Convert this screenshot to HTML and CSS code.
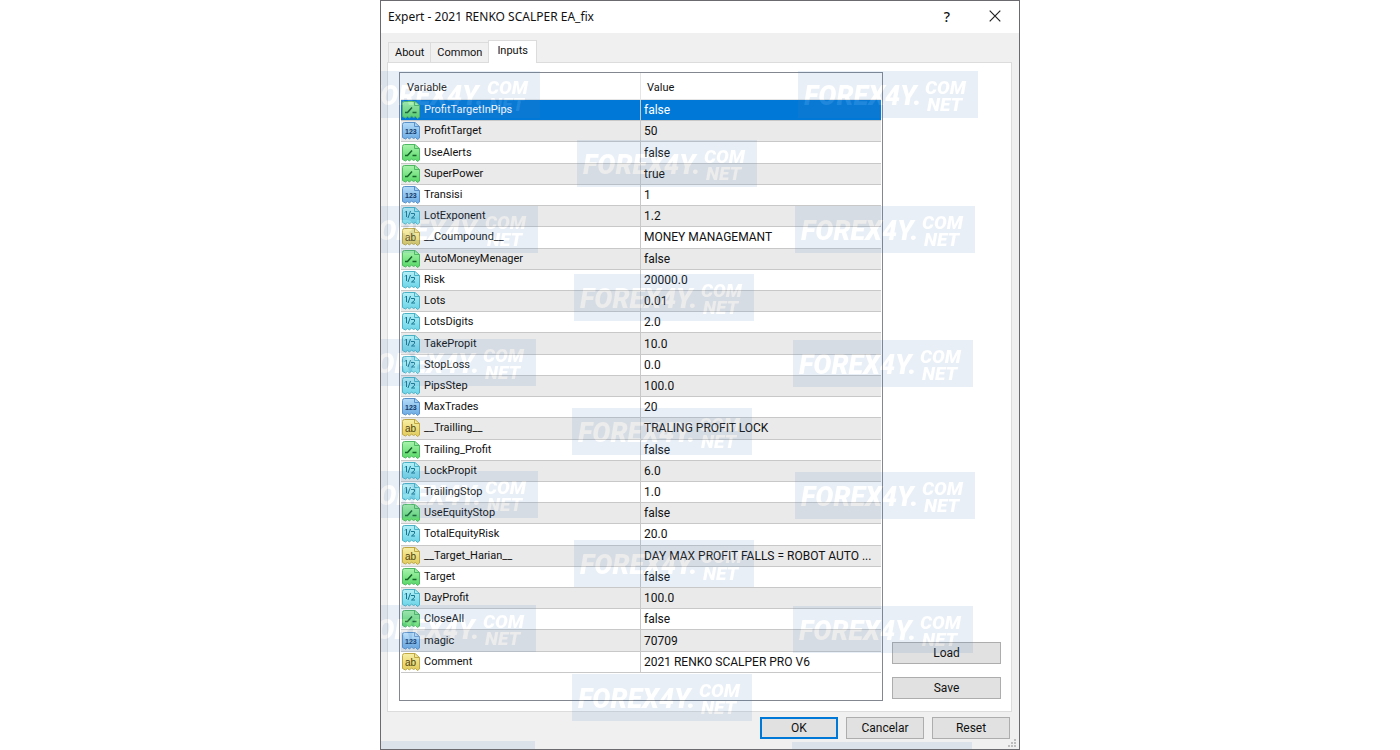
FILE: index.html
```html
<!DOCTYPE html>
<html lang="en">
<head>
  <meta charset="UTF-8" />
  <meta name="viewport" content="width=device-width, initial-scale=1.0" />
  <title>Expert - 2021 RENKO SCALPER EA_fix</title>
  <link rel="stylesheet" href="styles.css">
</head>
<body>

  <!-- shared icon shapes -->
  <svg class="defs" width="0" height="0" aria-hidden="true">
    <defs>
      <path id="note" d="M2.5 .5H13L17.5 4.5V16L15.5 17.5L13.5 15.5L11.5 16.5L9.5 15L7.5 17L5.5 15.5L3.5 17L.5 15.5V2.5Q.5 .5 2.5 .5Z" />
      <path id="fold" d="M12.5 .5V4.5H17.5" />
      <linearGradient id="green" x2="0" y2="1"><stop stop-color="#a9f3ad" /><stop offset="1" stop-color="#55d765" /></linearGradient>
      <linearGradient id="blue" x2="0" y2="1"><stop stop-color="#b5dcf8" /><stop offset="1" stop-color="#6aa9e3" /></linearGradient>
      <linearGradient id="cyan" x2="0" y2="1"><stop stop-color="#b4eff7" /><stop offset="1" stop-color="#69d3e6" /></linearGradient>
      <linearGradient id="yellow" x2="0" y2="1"><stop stop-color="#f8efa6" /><stop offset="1" stop-color="#e0ca5a" /></linearGradient>
      <mask id="cutout">
        <rect width="180" height="47" fill="#fff" />
        <text class="mark-big" x="6" y="34">FOREX4Y.</text>
        <text class="mark-small" x="127" y="23">COM</text>
        <text class="mark-small" x="129" y="40">NET</text>
      </mask>
    </defs>
  </svg>

  <main class="dialog">
    <header class="titlebar">
      <h1>Expert - 2021 RENKO SCALPER EA_fix</h1>
      <button class="title-button" aria-label="Help">?</button>
      <button class="title-button" aria-label="Close">
        <svg width="12" height="12" viewBox="0 0 12 12"><path d="M.7 .7L11.3 11.3M11.3 .7L.7 11.3" stroke="#222" stroke-width="1.2" /></svg>
      </button>
    </header>

    <nav class="tabs">
      <button class="tab">About</button>
      <button class="tab">Common</button>
      <button class="tab active">Inputs</button>
    </nav>

    <section class="panel">
      <div class="list">
        <table>
          <thead>
            <tr><th>Variable</th><th>Value</th></tr>
          </thead>
          <tbody id="inputs"></tbody>
        </table>
      </div>
      <div class="side">
        <button class="button">Load</button>
        <button class="button">Save</button>
      </div>
    </section>

    <footer class="actions">
      <button class="button primary">OK</button>
      <button class="button">Cancelar</button>
      <button class="button">Reset</button>
    </footer>

    <svg class="grip" width="8" height="8" viewBox="0 0 8 8" fill="#bdbdbd"><path d="M6 0h2v2H6zM3 3h2v2H3zM6 3h2v2H6zM0 6h2v2H0zM3 6h2v2H3zM6 6h2v2H6z" /></svg>
    <div id="marks"></div>
  </main>

  <script src="script.js"></script>
</body>
</html>
```
FILE: styles.css
```css
* {
  box-sizing: border-box;
}

body {
  margin: 0;
  background-color: #fff;
  color: #111;
  font-family: Roboto, "Liberation Sans", sans-serif;
  font-size: 12px;
}

button {
  font: inherit;
  color: inherit;
  padding: 0;
}

.defs {
  position: absolute;
}

.dialog {
  position: relative;
  max-width: 640px;
  min-height: 100vh;
  margin: 0 auto;
  padding-bottom: 10px;
  overflow: hidden;
  background-color: #f0f0f0;
  border: 1px solid #6b6b6f;
}

.titlebar {
  display: flex;
  align-items: center;
  height: 32px;
  padding: 0 0 2px 7px;
  background-color: #fff;
}

.titlebar h1 {
  flex: 1;
  margin: 0;
  font-family: "Noto Sans", sans-serif;
  font-size: 12px;
  font-weight: normal;
}

.title-button {
  display: flex;
  justify-content: center;
  align-items: center;
  width: 48px;
  height: 30px;
  border: none;
  background: none;
  font-family: "Noto Sans", sans-serif;
  font-size: 14px;
  font-weight: 500;
}

/* tabs */
.tabs {
  display: flex;
  align-items: flex-end;
  height: 29px;
  padding: 0 7px;
  font-size: 11px;
}

.tab {
  height: 20px;
  padding: 0 6px;
  border: 1px solid #dcdcdc;
  border-right: none;
  border-bottom: none;
  background-color: #f0f0f0;
}

.tab.active {
  position: relative;
  z-index: 1;
  height: 23px;
  margin-bottom: -1px;
  padding: 0 8px 3px;
  border-right: 1px solid #dcdcdc;
  background-color: #fff;
}

.panel {
  display: flex;
  gap: 9px;
  margin: 0 7px 5px 6px;
  padding: 9px 10px 10px 11px;
  border: 1px solid #dcdcdc;
  background-color: #fff;
}

.list {
  flex: 1;
  height: 629px;
  padding: 0 1px;
  border: 1px solid #828790;
}

table {
  width: 100%;
  height: 600px;
  border-collapse: separate;
  border-spacing: 0;
  table-layout: fixed;
}

th {
  height: 27px;
  padding: 2px 6px 0;
  border-bottom: 1px solid #e5e5e5;
  font-size: 11px;
  font-weight: normal;
  text-align: left;
}

th:first-child {
  border-right: 1px solid #e5e5e5;
}

td {
  padding: 0 3px;
  border-bottom: 1px solid #c8c8c8;
  line-height: 18px;
  white-space: nowrap;
  overflow: hidden;
}

td:first-child {
  padding-left: 1px;
  border-right: 1px solid #c8c8c8;
}

tbody tr:nth-child(even) {
  background-color: #eaeaea;
}

tbody tr.selected {
  background-color: #0078d7;
  color: #fff;
}

.name {
  display: flex;
  align-items: center;
  gap: 4px;
  font-size: 11px;
}

.icon-label {
  font-family: "Liberation Sans", sans-serif;
}

/* buttons */
.side {
  display: flex;
  flex-direction: column;
  justify-content: flex-end;
  gap: 13px;
  width: 109px;
  padding-bottom: 2px;
}

.button {
  height: 22px;
  border: 1px solid #adadad;
  background-color: #e1e1e1;
}

.button.primary {
  border: 2px solid #0078d7;
}

.actions {
  display: flex;
  justify-content: flex-end;
  gap: 8px;
  padding-right: 9px;
}

.actions .button {
  width: 78px;
}

.grip {
  position: absolute;
  right: 3px;
  bottom: 2px;
}

/* watermark */
.mark {
  position: absolute;
  pointer-events: none;
}

.mark-big,
.mark-small {
  font-family: Roboto, sans-serif;
  font-weight: 900;
  font-style: italic;
}

.mark-big {
  font-size: 27px;
}

.mark-small {
  font-size: 19px;
}

.mark .mark-big,
.mark .mark-small {
  fill: rgba(255, 255, 255, 0.13);
}
```
FILE: script.js
```js
const inputs = [
  ['bool', 'ProfitTargetInPips', 'false'],
  ['int', 'ProfitTarget', '50'],
  ['bool', 'UseAlerts', 'false'],
  ['bool', 'SuperPower', 'true'],
  ['int', 'Transisi', '1'],
  ['double', 'LotExponent', '1.2'],
  ['string', '__Coumpound__', 'MONEY MANAGEMANT'],
  ['bool', 'AutoMoneyMenager', 'false'],
  ['double', 'Risk', '20000.0'],
  ['double', 'Lots', '0.01'],
  ['double', 'LotsDigits', '2.0'],
  ['double', 'TakePropit', '10.0'],
  ['double', 'StopLoss', '0.0'],
  ['double', 'PipsStep', '100.0'],
  ['int', 'MaxTrades', '20'],
  ['string', '__Trailling__', 'TRALING PROFIT LOCK'],
  ['bool', 'Trailing_Profit', 'false'],
  ['double', 'LockPropit', '6.0'],
  ['double', 'TrailingStop', '1.0'],
  ['bool', 'UseEquityStop', 'false'],
  ['double', 'TotalEquityRisk', '20.0'],
  ['string', '__Target_Harian__', 'DAY MAX PROFIT FALLS = ROBOT AUTO ...'],
  ['bool', 'Target', 'false'],
  ['double', 'DayProfit', '100.0'],
  ['bool', 'CloseAll', 'false'],
  ['int', 'magic', '70709'],
  ['string', 'Comment', '2021 RENKO SCALPER PRO V6']
];

// fill gradient, outline colour, glyph
const icons = {
  bool: ['green', '#4fb862', '<path d="M3 11.5H5.5L10 6.5M10.5 11.5H14.5" fill="none" stroke="#17642b" stroke-width="1.5" />'],
  int: ['blue', '#5b91c9', '<text class="icon-label" x="3" y="12" font-size="7" font-weight="bold" fill="#123a68">123</text>'],
  double: ['cyan', '#4bb2c6', '<path d="M3 5.5L4.500 4V10M8.500 4L6 11M9 6.500H12.500V8.500L9.500 11H13" fill="none" stroke="#17768f" />'],
  string: ['yellow', '#bfa844', '<text class="icon-label" x="3" y="13" font-size="10" fill="#4f430e">ab</text>']
};

function drawIcon(type) {
  const [fill, line, glyph] = icons[type];
  return `<svg width="18" height="18" viewBox="0 0 18 18" aria-hidden="true">
    <use href="#note" fill="url(#${fill})" stroke="${line}" />
    <use href="#fold" fill="none" stroke="${line}" />${glyph}</svg>`;
}

document.getElementById('inputs').innerHTML = inputs.map(([type, name, value], i) => `
  <tr${i === 0 ? ' class="selected"' : ''}>
    <td><div class="name">${drawIcon(type)}<span>${name}</span></div></td>
    <td>${value}</td>
  </tr>`).join('');

// left and top of each watermark inside the dialog
const marks = [
  [-21, 70], [417, 70], [196, 139],
  [-23, 205], [414, 205], [193, 273],
  [-25, 338], [412, 339], [191, 407],
  [-23, 470], [414, 471], [193, 539],
  [-25, 604], [412, 605], [191, 673],
  [-26, 740], [411, 741]
];

document.getElementById('marks').innerHTML = marks.map(([x, y]) => `
  <svg class="mark" width="180" height="47" style="left: ${x}px; top: ${y}px" aria-hidden="true">
    <rect width="180" height="47" fill="rgba(78, 132, 193, 0.13)" mask="url(#cutout)" />
    ${y < 720 ? `<text class="mark-big" x="6" y="34">FOREX4Y.</text>
    <text class="mark-small" x="127" y="23">COM</text>
    <text class="mark-small" x="129" y="40">NET</text>` : ''}
  </svg>`).join('');
```
